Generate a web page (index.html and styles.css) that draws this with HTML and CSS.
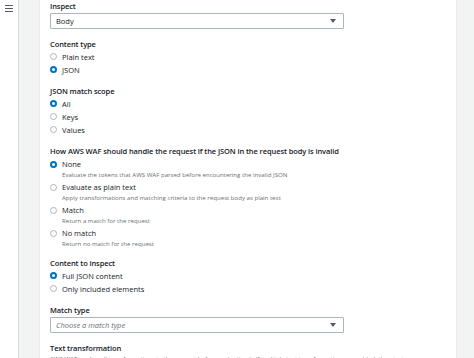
FILE: index.html
```html
<!DOCTYPE html>
<html lang="en">
<head>
    <meta charset="UTF-8">
    <title>Body inspection</title>
    <link rel="stylesheet" href="styles.css">
</head>
<body>
    <!-- side navigation -->
    <aside class="sidenav">
        <span class="burger"><i></i><i></i><i></i></span>
    </aside>

    <main class="content">
        <div class="card">
            <div class="field">
                <div class="label">Inspect</div>
                <div class="select"><span>Body</span><span class="caret"></span></div>
            </div>

            <div class="field">
                <div class="label">Content type</div>
                <div class="radio"><span class="dot"></span>Plain text</div>
                <div class="radio"><span class="dot on"></span>JSON</div>
            </div>

            <div class="field">
                <div class="label">JSON match scope</div>
                <div class="radio"><span class="dot on"></span>All</div>
                <div class="radio"><span class="dot"></span>Keys</div>
                <div class="radio"><span class="dot"></span>Values</div>
            </div>

            <div class="field">
                <div class="label">How AWS WAF should handle the request if the JSON in the request body is invalid</div>
                <div class="options">
                    <div class="option">
                        <div class="radio"><span class="dot on"></span>None</div>
                        <div class="desc">Evaluate the tokens that AWS WAF parsed before encountering the invalid JSON</div>
                    </div>
                    <div class="option">
                        <div class="radio"><span class="dot"></span>Evaluate as plain text</div>
                        <div class="desc">Apply transformations and matching criteria to the request body as plain text</div>
                    </div>
                    <div class="option">
                        <div class="radio"><span class="dot"></span>Match</div>
                        <div class="desc">Return a match for the request</div>
                    </div>
                    <div class="option">
                        <div class="radio"><span class="dot"></span>No match</div>
                        <div class="desc">Return no match for the request</div>
                    </div>
                </div>
            </div>

            <div class="field">
                <div class="label">Content to inspect</div>
                <div class="radio"><span class="dot on"></span>Full JSON content</div>
                <div class="radio"><span class="dot"></span>Only included elements</div>
            </div>

            <div class="field">
                <div class="label">Match type</div>
                <div class="select"><span class="placeholder">Choose a match type</span><span class="caret"></span></div>
            </div>

            <div class="field">
                <div class="label">Text transformation</div>
                <div class="desc">AWS WAF applies all transformations to the request before evaluating it. If multiple text transformations are added, then text</div>
            </div>
        </div>
    </main>
</body>
</html>
```

FILE: styles.css
```css
* { margin: 0; padding: 0; box-sizing: border-box; }
body { display: flex; height: 358px; overflow: hidden; background: #f2f3f3; font-family: 'Open Sans', 'Noto Sans', sans-serif; color: #16191f; }

/* side navigation */
.sidenav { width: 19px; flex-shrink: 0; background: #fff; border-right: 1px solid #d5dbdb; }
.burger { display: flex; flex-direction: column; gap: 2px; width: 8px; margin: 5px 0 0 5px; }
.burger i { display: block; height: 1px; background: #545b64; }

/* main area */
.content { flex: 1; padding: 0 18px 0 21px; }
.card { background: #fff; height: 100%; padding: 0 10px; box-shadow: 0 0 1px rgba(0,28,36,0.2); }

.field { margin-bottom: 8px; }
.label { font-size: 7.5px; font-weight: 600; letter-spacing: -0.1px; line-height: 11px; padding-top: 2px; white-space: nowrap; }
.field:first-child .label { padding-top: 1px; margin-bottom: 1px; }

/* select */
.select { width: 294px; height: 16px; margin-bottom: 2px; border: 1px solid #aab7b8; border-radius: 1px; display: flex; align-items: center; justify-content: space-between; padding: 0 7px 0 5px; font-size: 7.5px; }
.field:nth-last-child(2) .select { margin-top: 1px; margin-bottom: 7px; }
.placeholder { color: #687078; font-style: italic; }
.caret { width: 0; height: 0; border-left: 3px solid transparent; border-right: 3px solid transparent; border-top: 4px solid #545b64; }

/* radios */
.radio { display: flex; align-items: center; height: 13px; font-size: 7.5px; }
.dot { width: 7px; height: 7px; border: 1px solid #aab7b8; border-radius: 50%; margin-right: 5px; flex-shrink: 0; }
.dot.on { border: 2px solid #0073bb; }

.options { display: flex; flex-direction: column; gap: 2px; margin-top: 1px; }
.option .radio { height: 12px; }
.desc { font-size: 6.1px; line-height: 9px; color: #687078; padding-left: 12px; white-space: nowrap; }
.field > .desc { padding-left: 0; }
```
